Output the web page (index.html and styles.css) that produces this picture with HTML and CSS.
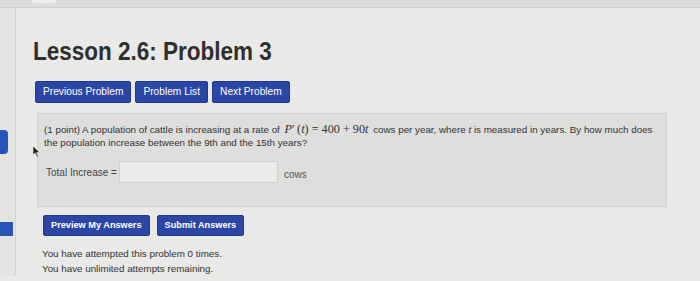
FILE: index.html
```html
<!DOCTYPE html>
<html>
<head>
<meta charset="utf-8">
<link rel="stylesheet" href="styles.css">
</head>
<body>
<div class="topbar"><div class="tab"></div></div>
<div class="frame">
  <aside class="sidebar">
    <div class="chip chip-a"></div>
    <div class="chip chip-b"></div>
  </aside>
  <main class="main">
    <h1 class="title">Lesson 2.6: Problem 3</h1>
    <nav class="nav">
      <span class="btn">Previous Problem</span>
      <span class="btn">Problem List</span>
      <span class="btn">Next Problem</span>
    </nav>
    <section class="problem">
      <p class="statement"><span class="line">(1 point) A population of cattle is increasing at a rate of <span class="math"><i>P</i>′&thinsp;(<i>t</i>) = 400 + 90<i>t</i></span> cows per year, where <i>t</i> is measured in years. By how much does</span><span class="line">the population increase between the 9th and the 15th years?</span></p>
      <div class="answer">
        <span class="label">Total Increase =</span>
        <span class="input"></span>
        <span class="unit">cows</span>
      </div>
    </section>
    <div class="actions">
      <span class="btn btn-lg">Preview My Answers</span>
      <span class="btn btn-lg">Submit Answers</span>
    </div>
    <p class="note"><span class="line">You have attempted this problem 0 times.</span><span class="line">You have unlimited attempts remaining.</span></p>
  </main>
</div>
<svg class="cursor" width="9" height="13" viewBox="0 0 9 13"><path d="M1 1 L1 10 L3.2 8 L5 12 L6.3 11.4 L4.6 7.6 L7.6 7.4 Z" fill="#222" stroke="#eee" stroke-width="0.6"/></svg>
</body>
</html>
```

FILE: styles.css
```css
* { box-sizing: border-box; }
html, body { margin: 0; padding: 0; }
body {
  width: 700px;
  height: 281px;
  overflow: hidden;
  background: #e9e9e7;
  font-family: "Liberation Sans", Arial, sans-serif;
  color: #333;
  position: relative;
}
.topbar {
  height: 8px;
  background: #dcdcda;
  border-bottom: 1px solid #cfcfcd;
  padding-left: 32px;
}
.tab {
  width: 24px;
  height: 3px;
  background: #eeeeec;
  border-radius: 0 0 3px 3px;
}
.frame {
  display: flex;
  height: 268px;
}
.sidebar {
  width: 16px;
  flex: none;
  background: #e3e3e1;
  border-right: 1px solid #d4d4d2;
}
.chip { background: #2a55b8; }
.chip-a {
  margin-top: 122px;
  width: 8px;
  height: 24px;
  border-radius: 0 4px 4px 0;
}
.chip-b {
  margin-top: 68px;
  width: 13px;
  height: 14px;
}
.main {
  flex: 1;
  padding: 29px 0 0 17px;
}
.title {
  margin: 0;
  font-size: 22.5px;
  font-weight: 700;
  color: #2f2f2f;
  line-height: 26px;
  white-space: nowrap;
  transform: scaleY(1.15);
  transform-origin: left top;
}
.nav {
  display: flex;
  gap: 4px;
  margin-top: 18px;
  padding-left: 2px;
}
.btn {
  display: inline-block;
  background: #2c46a6;
  border: 1px solid #22388a;
  color: #fff;
  border-radius: 2px;
  font-size: 10.2px;
  line-height: 20px;
  padding: 0 7px;
  white-space: nowrap;
}
.problem {
  margin-top: 10px;
  margin-left: 4px;
  width: 630px;
  height: 94px;
  background: #dededc;
  border: 1px solid #d2d2d0;
  padding: 9px 6px 0 6px;
}
.statement {
  margin: 0;
  font-size: 9.8px;
  line-height: 12.5px;
  color: #333;
}
.line {
  display: block;
  white-space: nowrap;
}
.math {
  font-family: "Liberation Serif", "Times New Roman", serif;
  font-size: 12.2px;
  line-height: 1;
  padding: 0 2px;
}
.answer {
  display: flex;
  align-items: center;
  margin-top: 12px;
  padding-left: 2px;
}
.label {
  font-size: 10px;
  color: #444;
  width: 73px;
}
.input {
  width: 159px;
  height: 22px;
  background: #ebebe9;
  border: 1px solid #d0d0ce;
  border-radius: 2px;
}
.unit {
  margin-left: 6px;
  font-size: 10px;
  color: #555;
  padding-top: 4px;
}
.actions {
  display: flex;
  gap: 7px;
  margin-top: 8px;
  margin-left: 10px;
}
.btn-lg {
  font-weight: 700;
  font-size: 9.2px;
  line-height: 19px;
  padding: 0 7px;
}
.note {
  margin: 10px 0 0 9px;
  font-size: 9.8px;
  line-height: 15px;
  color: #333;
}
.cursor {
  position: absolute;
  left: 32px;
  top: 145px;
}
```
